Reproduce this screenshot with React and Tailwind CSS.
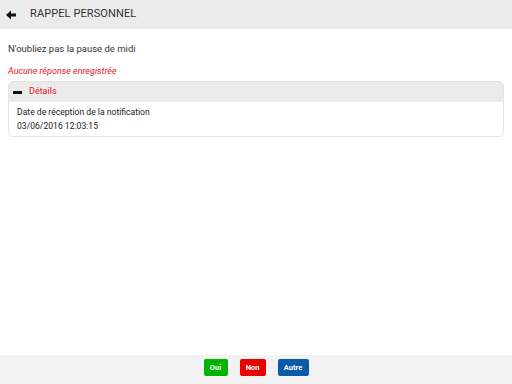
import React from "react";

const App = () => {
  return (
    <div className="h-[384px] w-[512px] flex flex-col bg-white font-['Roboto',sans-serif] text-[#333]">
      <div className="h-[29px] shrink-0 bg-[#ebebeb] flex items-center">
        <svg className="ml-[6px]" width="10" height="10" viewBox="0 0 10 10">
          <path d="M0 5 L5 0.5 L5 3.5 L10 3.5 L10 6.5 L5 6.5 L5 9.5 Z" fill="#111" />
        </svg>
        <span className="ml-[14px] text-[11px] text-[#333] tracking-[0.1px]">RAPPEL PERSONNEL</span>
      </div>

      <div className="flex-1 px-[8px]">
        <div className="mt-[13px] text-[9.5px] leading-[14px]">N'oubliez pas la pause de midi</div>
        <div className="mt-[9px] text-[9px] leading-[12px] italic text-[#e8141b]">Aucune réponse enregistrée</div>
        <div className="mt-[4px] border border-[#e4e4e4] rounded-[5px] overflow-hidden">
          <div className="h-[20px] bg-[#ebebeb] flex items-center px-[4px]">
            <div className="w-[9px] h-[3px] bg-[#111]"></div>
            <span className="ml-[7px] text-[9px] text-[#e8141b]">Détails</span>
          </div>
          <div className="px-[8px] pt-[3px] pb-[3px] text-[8.6px] leading-[14px] text-[#222]">
            <div>Date de réception de la notification</div>
            <div>03/06/2016 12:03:15</div>
          </div>
        </div>
      </div>

      <div className="h-[29px] shrink-0 bg-[#f2f2f2] flex items-start justify-center pt-[4px] gap-[12px]">
        <button className="w-[24px] h-[17px] bg-[#00b400] rounded-[2px] text-white text-[7.5px] font-bold">Oui</button>
        <button className="w-[26px] h-[17px] bg-[#eb0000] rounded-[2px] text-white text-[7.5px] font-bold">Non</button>
        <button className="w-[31px] h-[17px] bg-[#0b5aa8] rounded-[2px] text-white text-[7.5px] font-bold">Autre</button>
      </div>
    </div>
  );
};

export default App;
